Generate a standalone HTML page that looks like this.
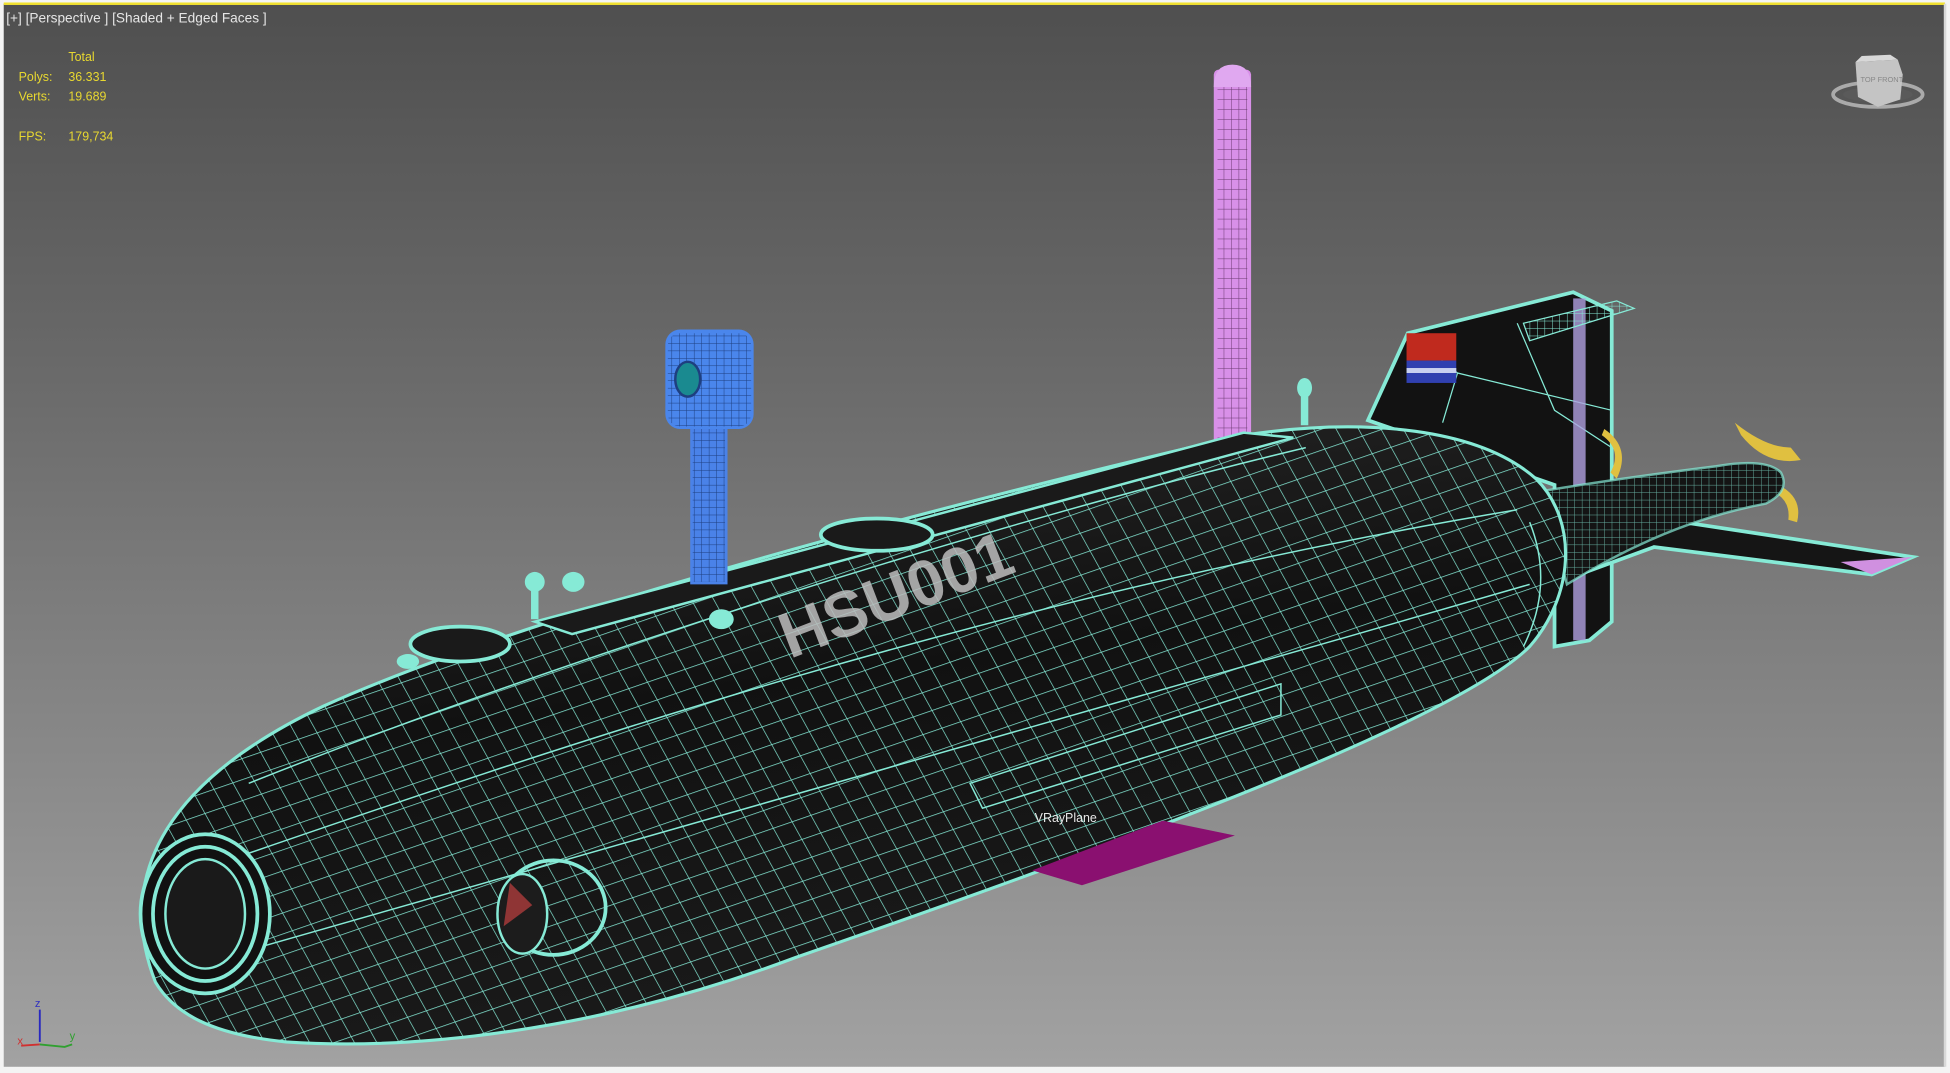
<!DOCTYPE html>
<html><head><meta charset="utf-8"><style>
html,body{margin:0;padding:0;background:#fff;overflow:hidden}
svg{display:block}
</style></head><body>
<svg width="1950" height="1073" viewBox="0 0 1568 863" preserveAspectRatio="none" xmlns="http://www.w3.org/2000/svg" font-family="Liberation Sans, sans-serif">
<defs>
<linearGradient id="bg" x1="0" y1="0" x2="0" y2="1">
<stop offset="0" stop-color="#4f4f4f"/><stop offset="0.35" stop-color="#6a6a6a"/><stop offset="1" stop-color="#a2a2a2"/>
</linearGradient>
<linearGradient id="hullg" x1="0" y1="0" x2="0.3" y2="1">
<stop offset="0" stop-color="#2a2a2a"/><stop offset="0.5" stop-color="#111"/><stop offset="1" stop-color="#1a1a1a"/>
</linearGradient>
<pattern id="mesh" width="16" height="16" patternUnits="userSpaceOnUse" patternTransform="rotate(-19) skewX(10)">
<path d="M0 0H16M0 0V16" stroke="#86ead6" stroke-width="1.1" fill="none"/>
</pattern>
<pattern id="mesh2" width="6" height="6" patternUnits="userSpaceOnUse">
<path d="M0 0H6M0 0V6" stroke="#86ead6" stroke-width="0.8" fill="none"/>
</pattern>
<pattern id="meshp" width="6" height="8" patternUnits="userSpaceOnUse">
<path d="M0 0H6M0 0V8" stroke="#6a3a70" stroke-width="0.8" fill="none"/>
</pattern>
<pattern id="meshb" width="6" height="6" patternUnits="userSpaceOnUse">
<path d="M0 0H6M0 0V6" stroke="#1e3f80" stroke-width="0.8" fill="none"/>
</pattern>
</defs>
<rect x="0" y="0" width="1568" height="863" fill="#f4f4f4"/>
<rect x="3" y="3" width="1561" height="855" fill="url(#bg)"/>
<rect x="3" y="2" width="1561" height="2" fill="#f0e030"/>
<rect x="1563" y="3" width="2" height="855" fill="#d8d8d8"/>

<text x="5" y="18" font-size="11" fill="#e6e6e6">[+] [Perspective ] [Shaded + Edged Faces ]</text>
<g font-size="10" fill="#e8d830">
<text x="55" y="49">Total</text>
<text x="15" y="65">Polys:</text><text x="55" y="65">36.331</text>
<text x="15" y="81">Verts:</text><text x="55" y="81">19.689</text>
<text x="15" y="113">FPS:</text><text x="55" y="113">179,734</text>
</g>

<!-- viewcube -->
<ellipse cx="1510" cy="76" rx="36" ry="10" fill="none" stroke="#aaa" stroke-width="3"/>
<ellipse cx="1510" cy="76" rx="28" ry="6" fill="#5a5a5a"/>
<path d="M1492 50 L1526 48 L1530 60 L1528 80 L1510 86 L1494 78 Z" fill="#c4c4c4"/>
<path d="M1492 50 L1526 48 L1520 44 L1497 45 Z" fill="#d8d8d8"/>
<text x="1496" y="66" font-size="6" fill="#888">TOP  FRONT</text>

<!-- axis -->
<line x1="32" y1="838" x2="32" y2="812" stroke="#2828c0" stroke-width="1.5"/>
<text x="28" y="810" font-size="9" fill="#3030c0">z</text>
<line x1="17" y1="841" x2="32" y2="840" stroke="#d03030" stroke-width="1.5"/>
<text x="14" y="840" font-size="9" fill="#d03030">x</text>
<path d="M32 840 L52 842 L58 840" stroke="#30a030" stroke-width="1.5" fill="none"/>
<text x="56" y="836" font-size="9" fill="#30a030">y</text>

<!-- fin vertical -->
<path d="M1100 338 L1132 268 L1265 235 L1296 250 L1296 500 L1278 515 L1250 520 L1250 390 Z" fill="#121212" stroke="#86ead6" stroke-width="3"/>
<path d="M1132 268 L1172 300 L1296 330 M1172 300 L1160 340 M1220 260 L1250 330 L1296 360" stroke="#86ead6" stroke-width="1" fill="none"/>
<rect x="1265" y="240" width="10" height="275" fill="#b0a0e0" opacity="0.8"/>
<rect x="1131" y="268" width="40" height="22" fill="#c02a1e"/>
<rect x="1131" y="290" width="40" height="18" fill="#3040b0"/>
<rect x="1131" y="296" width="40" height="4" fill="#c8d0f0"/>
<path d="M1225 260 L1300 242 L1314 248 L1230 274 Z" fill="url(#mesh2)" stroke="#86ead6" stroke-width="1"/>
<!-- horizontal fin -->
<path d="M1270 462 L1340 418 L1538 448 L1505 462 L1330 440 Z" fill="#151515" stroke="#86ead6" stroke-width="3"/>
<path d="M1480 452 L1538 448 L1505 462 Z" fill="#d090e0"/>
<!-- yellow props -->
<path d="M1290 345 Q1312 360 1300 385 L1295 380 Q1305 362 1288 350 Z" fill="#e0c040"/>
<path d="M1395 340 Q1420 360 1440 360 L1448 370 Q1420 375 1400 350 Z" fill="#e0c040"/>
<path d="M1430 390 Q1450 400 1445 420 L1438 418 Q1440 402 1425 395 Z" fill="#e0c040"/>
<!-- tail cone -->
<path d="M1240 395 Q1300 385 1380 375 Q1420 368 1432 380 Q1440 395 1420 405 Q1340 420 1260 470 Z" fill="#141414"/>
<path d="M1240 395 Q1300 385 1380 375 Q1420 368 1432 380 Q1440 395 1420 405 Q1340 420 1260 470 Z" fill="url(#mesh2)" opacity="0.7" stroke="#86ead6" stroke-width="2"/>

<!-- pink mast -->
<rect x="976" y="56" width="30" height="302" rx="4" fill="#d890e8"/>
<rect x="979" y="60" width="24" height="296" fill="url(#meshp)"/>
<path d="M976 70 Q976 52 991 52 Q1006 52 1006 70 Z" fill="#e0a8f0"/>

<!-- hull -->
<path d="M125 790 C90 700 140 625 260 568 C420 495 780 400 1000 350 C1100 335 1190 345 1235 385 C1270 420 1265 480 1230 520 C1170 580 900 680 640 770 C480 830 330 845 230 838 C170 832 140 815 125 790 Z" fill="url(#hullg)"/>
<path d="M125 790 C90 700 140 625 260 568 C420 495 780 400 1000 350 C1100 335 1190 345 1235 385 C1270 420 1265 480 1230 520 C1170 580 900 680 640 770 C480 830 330 845 230 838 C170 832 140 815 125 790 Z" fill="url(#mesh)" stroke="#86ead6" stroke-width="2.5"/>
<g stroke="#86ead6" stroke-width="1.2" fill="none">
<path d="M200 630 C450 530 800 420 1050 360"/>
<path d="M160 700 C450 600 800 480 1220 410"/>
<path d="M180 770 C450 690 850 580 1230 470"/>
<path d="M780 630 L1030 550 L1030 575 L790 650 Z"/>
<path d="M1230 420 Q1250 470 1225 520"/>
</g>
<!-- deck -->
<path d="M430 500 L1000 348 L1040 352 L460 510 Z" fill="#1a1a1a" stroke="#86ead6" stroke-width="2"/>
<ellipse cx="370" cy="518" rx="40" ry="14" fill="#1a1a1a" stroke="#86ead6" stroke-width="3"/>
<ellipse cx="705" cy="430" rx="45" ry="13" fill="#1a1a1a" stroke="#86ead6" stroke-width="3"/>
<!-- nose -->
<ellipse cx="165" cy="735" rx="52" ry="64" fill="#111" stroke="#86ead6" stroke-width="3"/>
<ellipse cx="165" cy="735" rx="42" ry="54" fill="none" stroke="#86ead6" stroke-width="3"/>
<ellipse cx="165" cy="735" rx="32" ry="44" fill="#1a1a1a" stroke="#86ead6" stroke-width="2"/>
<ellipse cx="445" cy="730" rx="42" ry="38" fill="none" stroke="#86ead6" stroke-width="3"/>
<ellipse cx="420" cy="735" rx="20" ry="32" fill="#1c1c1c" stroke="#86ead6" stroke-width="2"/>
<path d="M410 710 L428 728 L405 745 Z" fill="#c04040" opacity="0.7"/>
<g fill="#86ead6">
<ellipse cx="430" cy="468" rx="8" ry="8"/><rect x="427" y="468" width="6" height="30"/>
<ellipse cx="461" cy="468" rx="9" ry="8"/>
<ellipse cx="580" cy="498" rx="10" ry="8"/>
<ellipse cx="328" cy="532" rx="9" ry="6"/>
<ellipse cx="1049" cy="312" rx="6" ry="8"/><rect x="1046" y="312" width="6" height="30"/>
</g>
<text x="0" y="0" font-size="52" font-weight="bold" fill="#bdbdbd" opacity="0.85" transform="translate(635 530) rotate(-21)">HSU001</text>

<!-- blue periscope -->
<rect x="555" y="340" width="30" height="130" fill="#4a82e8"/>
<rect x="557" y="340" width="26" height="128" fill="url(#meshb)"/>
<rect x="535" y="265" width="71" height="80" rx="12" fill="#4a86ec"/>
<rect x="537" y="268" width="67" height="75" rx="10" fill="url(#meshb)"/>
<ellipse cx="553" cy="305" rx="10" ry="14" fill="#1a8a90" stroke="#1e3f80" stroke-width="2"/>

<path d="M830 700 L935 660 L993 672 L870 712 Z" fill="#8a1070"/>
<text x="832" y="661" font-size="10" fill="#e8e8e8">VRayPlane</text>
</svg>
</body></html>
